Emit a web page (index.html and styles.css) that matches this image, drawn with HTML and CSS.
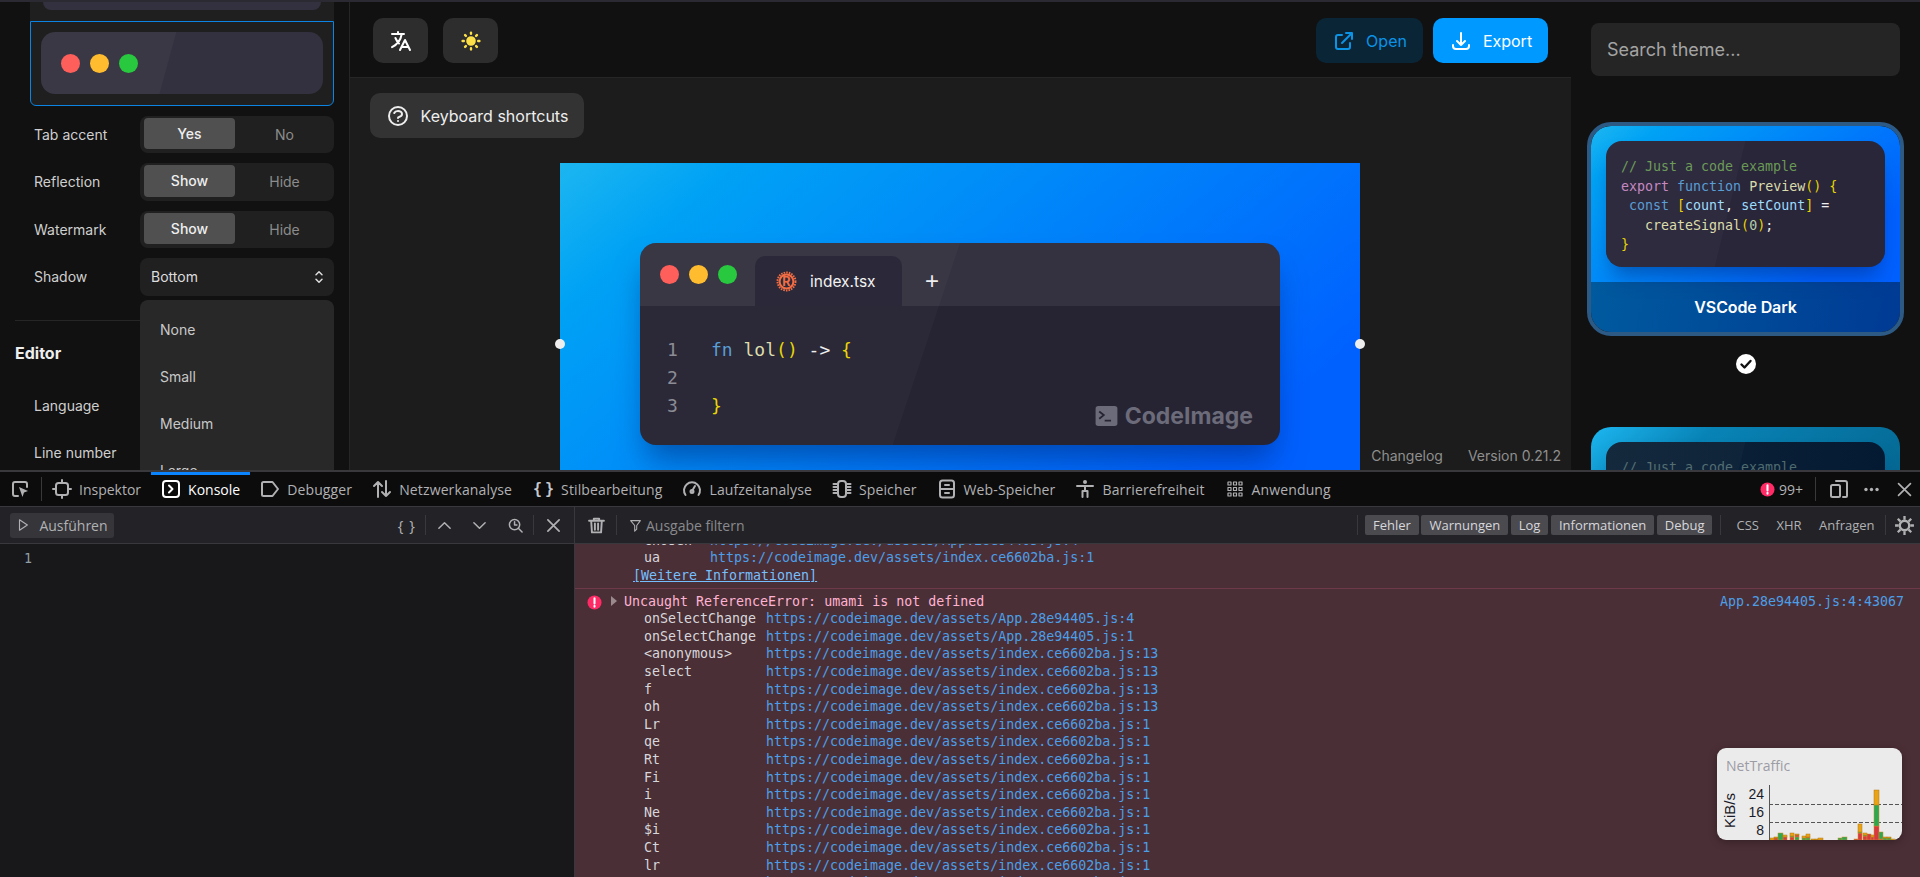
FILE: index.html
```html
<!DOCTYPE html>
<html lang="de">
<head>
<meta charset="utf-8">
<title>CodeImage</title>
<link rel="stylesheet" href="styles.css">
</head>
<body>
<div class="app">
  <aside class="sidebar">
    <div class="frame-card prev"><div class="mini-window"></div></div>
    <div class="frame-card selected">
      <div class="mini-window full">
        <span class="dot red"></span><span class="dot yellow"></span><span class="dot green"></span>
      </div>
    </div>
    <div class="rows">
      <div class="row"><span class="row-label">Tab accent</span><div class="seg"><span class="seg-on">Yes</span><span class="seg-off">No</span></div></div>
      <div class="row"><span class="row-label">Reflection</span><div class="seg"><span class="seg-on">Show</span><span class="seg-off">Hide</span></div></div>
      <div class="row"><span class="row-label">Watermark</span><div class="seg"><span class="seg-on">Show</span><span class="seg-off">Hide</span></div></div>
      <div class="row"><span class="row-label">Shadow</span>
        <div class="select">Bottom
          <svg class="selector" viewBox="0 0 24 24"><path d="M8 9l4-4 4 4m0 6l-4 4-4-4"/></svg>
          <div class="dropdown"><span>None</span><span>Small</span><span>Medium</span><span>Large</span></div>
        </div>
      </div>
    </div>
    <hr class="divider">
    <h2 class="section-title">Editor</h2>
    <div class="editor-rows">
      <span class="row-label">Language</span>
      <span class="row-label">Line number</span>
    </div>
  </aside>

  <main class="main">
    <div class="toolbar">
      <button class="btn-icon">
        <svg class="ic22" viewBox="0 0 24 24"><path d="M3 5h12M9 3v2m1.048 9.5A18.022 18.022 0 016.412 9m6.088 9h7M11 21l5-10 5 10M12.751 5C11.783 10.77 8.07 15.61 3 18.129"/></svg>
      </button>
      <button class="btn-icon">
        <svg class="ic22 sun" viewBox="0 0 20 20"><path d="M10 2a1 1 0 011 1v1a1 1 0 11-2 0V3a1 1 0 011-1zm4 8a4 4 0 11-8 0 4 4 0 018 0zm-.464 4.95l.707.707a1 1 0 001.414-1.414l-.707-.707a1 1 0 00-1.414 1.414zm2.12-10.607a1 1 0 010 1.414l-.706.707a1 1 0 11-1.414-1.414l.707-.707a1 1 0 011.414 0zM17 11a1 1 0 100-2h-1a1 1 0 100 2h1zm-7 4a1 1 0 011 1v1a1 1 0 11-2 0v-1a1 1 0 011-1zM5.05 6.464A1 1 0 106.465 5.05l-.708-.707a1 1 0 00-1.414 1.414l.707.707zm1.414 8.486l-.707.707a1 1 0 01-1.414-1.414l.707-.707a1 1 0 011.414 1.414zM4 11a1 1 0 100-2H3a1 1 0 000 2h1z"/></svg>
      </button>
      <div class="toolbar-spacer"></div>
      <button class="btn-open">
        <svg class="ic22" viewBox="0 0 24 24"><path d="M10 6H6a2 2 0 00-2 2v10a2 2 0 002 2h10a2 2 0 002-2v-4M14 4h6m0 0v6m0-6L10 14"/></svg>Open
      </button>
      <button class="btn-export">
        <svg class="ic22" viewBox="0 0 24 24"><path d="M4 16v1a3 3 0 003 3h10a3 3 0 003-3v-1m-4-4l-4 4m0 0l-4-4m4 4V4"/></svg>Export
      </button>
    </div>
    <div class="stage">
      <button class="btn-shortcuts">
        <svg class="ic24" viewBox="0 0 24 24"><path d="M8.228 9c.549-1.165 2.03-2 3.772-2 2.21 0 4 1.343 4 3 0 1.4-1.278 2.575-3.006 2.907-.542.104-.994.54-.994 1.093m0 3h.01M21 12a9 9 0 11-18 0 9 9 0 0118 0z"/></svg>Keyboard shortcuts
      </button>
      <div class="canvas">
        <span class="handle left"></span><span class="handle right"></span>
        <div class="window">
          <div class="win-head">
            <span class="dot red"></span><span class="dot yellow"></span><span class="dot green"></span>
            <div class="tab">
              <svg class="rust" viewBox="0 0 20 20"><circle class="rust-teeth" cx="10" cy="10" r="8.6"/><circle class="rust-ring" cx="10" cy="10" r="6.6"/><text x="10" y="14.4" class="rust-r">R</text></svg>
              index.tsx
            </div>
            <span class="plus">+</span>
          </div>
          <div class="win-body">
            <div class="gutter"><span>1</span><span>2</span><span>3</span></div>
            <div class="code"><span><i class="kw">fn</i> <i class="fnname">lol</i><i class="yl">()</i> <i class="wh">-&gt;</i> <i class="yl">{</i></span><span>&nbsp;</span><span><i class="yl">}</i></span></div>
          </div>
          <div class="watermark">
            <svg class="wm-icon" viewBox="0 0 24 22"><rect width="24" height="22" rx="3"/><path d="M4 6l5 4-5 4M10 16h7"/></svg>
            <span>CodeImage</span>
          </div>
        </div>
      </div>
      <div class="foot"><span>Changelog</span><span>Version 0.21.2</span></div>
    </div>
  </main>

  <aside class="themes">
    <div class="search">Search theme...</div>
    <div class="theme-card active">
      <div class="theme-art">
        <div class="theme-code">
<span class="cm">// Just a code example</span>
<span><i class="pk">export</i> <i class="kw">function</i> <i class="fnname">Preview</i><i class="yl">()</i> <i class="yl">{</i></span>
<span> <i class="kw">const</i> <i class="yl">[</i><i class="vr">count</i><i class="wh">,</i> <i class="vr">setCount</i><i class="yl">]</i> <i class="wh">=</i></span>
<span>   <i class="fnname">createSignal</i><i class="yl">(</i><i class="nm">0</i><i class="yl">)</i><i class="wh">;</i></span>
<span class="yl">}</span></div>
      </div>
      <div class="theme-label">VSCode Dark</div>
    </div>
    <div class="check-wrap">
      <svg class="check" viewBox="0 0 20 20"><circle cx="10" cy="10" r="10"/><path d="M5.5 10.5l3 3 6-6.5"/></svg>
    </div>
    <div class="theme-card second">
      <div class="theme-art dim">
        <div class="theme-code deep"><span class="cm dimcm">// Just a code example</span></div>
      </div>
    </div>
  </aside>
</div>

<section class="devtools">
  <nav class="dt-tabs">
    <span class="dt-pick">
      <svg class="dt-ic" viewBox="0 0 20 20"><path d="M8 17H5a2 2 0 01-2-2V5a2 2 0 012-2h10a2 2 0 012 2v3"/><path class="fill" d="M9 8l9 4-4 1.5L12.5 18z"/></svg>
    </span>
    <a class="dt-tab"><svg class="dt-ic" viewBox="0 0 20 20"><rect x="4" y="4" width="12" height="12" rx="2.5"/><path d="M10 1v3M10 16v3M1 10h3M16 10h3"/></svg>Inspektor</a>
    <a class="dt-tab current"><svg class="dt-ic" viewBox="0 0 20 20"><rect x="2" y="2" width="16" height="16" rx="3"/><path d="M8 6.5l3.5 3.5L8 13.5"/></svg>Konsole</a>
    <a class="dt-tab"><svg class="dt-ic" viewBox="0 0 20 20"><path d="M3.5 3h9l5.5 7-5.5 7h-9a1.500 1.500 0 01-1.500-1.500v-11A1.500 1.500 0 013.500 3z"/></svg>Debugger</a>
    <a class="dt-tab"><svg class="dt-ic" viewBox="0 0 20 20"><path d="M6 18V3M2 7l4-4 4 4M14 2v15M10 13l4 4 4-4"/></svg>Netzwerkanalyse</a>
    <a class="dt-tab"><span class="braces">{ }</span>Stilbearbeitung</a>
    <a class="dt-tab"><svg class="dt-ic" viewBox="0 0 20 20"><path d="M3.500 16a8 8 0 1113 0M10 12l3-5"/><circle cx="10" cy="12.500" r="1.500"/></svg>Laufzeitanalyse</a>
    <a class="dt-tab"><svg class="dt-ic" viewBox="0 0 20 20"><rect x="6" y="2" width="8" height="16" rx="3"/><path d="M1.500 5H5M1.500 8H5M1.500 11H5M1.500 14H5M15 5h3.500M15 8h3.500M15 11h3.500M15 14h3.500"/></svg>Speicher</a>
    <a class="dt-tab"><svg class="dt-ic" viewBox="0 0 20 20"><rect x="3" y="1.500" width="14" height="17" rx="2.500"/><path d="M3 10h14M8 6h4M8 14h4"/></svg>Web-Speicher</a>
    <a class="dt-tab"><svg class="dt-ic" viewBox="0 0 20 20"><circle class="fill" cx="10" cy="3" r="2"/><path d="M2 7h16M10 7v5M7.500 18v-6h5v6"/></svg>Barrierefreiheit</a>
    <a class="dt-tab"><svg class="dt-ic thin" viewBox="0 0 20 20"><path d="M3 3h3v3H3zM8.500 3h3v3h-3zM14 3h3v3h-3zM3 8.500h3v3H3zM8.500 8.500h3v3h-3zM14 8.500h3v3h-3zM3 14h3v3H3zM8.500 14h3v3h-3zM14 14h3v3h-3z"/></svg>Anwendung</a>
    <div class="dt-right">
      <svg class="err" viewBox="0 0 16 16"><circle cx="8" cy="8" r="7.500"/><path d="M8 3.500v5.500M8 11.500v1"/></svg>
      <span class="dt-count">99+</span>
      <span class="vsep tall"></span>
      <svg class="dt-ic resp" viewBox="0 0 20 20"><path d="M7 2h9a2 2 0 012 2v13a1 1 0 01-1 1h-3"/><rect x="2" y="6" width="9" height="12" rx="1.500"/></svg>
      <svg class="dt-ic more" viewBox="0 0 20 20"><circle class="fill" cx="3.500" cy="10" r="2"/><circle class="fill" cx="10" cy="10" r="2"/><circle class="fill" cx="16.500" cy="10" r="2"/></svg>
      <svg class="dt-ic closex" viewBox="0 0 20 20"><path d="M3 3l14 14M17 3L3 17"/></svg>
    </div>
  </nav>

  <div class="dt-panes">
    <div class="dt-editor">
      <div class="editor-bar">
        <button class="run"><svg class="tb-ic" viewBox="0 0 16 16"><path d="M4 2l9 6-9 6z"/></svg>Ausführen</button>
        <div class="toolbar-spacer"></div>
        <span class="brace-btn">{ }</span>
        <span class="vsep"></span>
        <svg class="tb-ic up" viewBox="0 0 16 16"><path d="M2 11l6-6 6 6"/></svg>
        <svg class="tb-ic down" viewBox="0 0 16 16"><path d="M2 5l6 6 6-6"/></svg>
        <svg class="tb-ic hist" viewBox="0 0 16 16"><circle cx="7" cy="7" r="5.500"/><path d="M11 11l4 4M7 4v3.500h2.500"/></svg>
        <span class="vsep"></span>
        <svg class="tb-ic shut" viewBox="0 0 16 16"><path d="M2 2l12 12M14 2L2 14"/></svg>
      </div>
      <div class="editor-gutter">1</div>
    </div>
    <div class="dt-console">
      <div class="console-bar">
        <svg class="tb-ic trash" viewBox="0 0 16 16"><path d="M1 3.500h14M5.500 3.500V1.500h5v2M3 3.500l.7 11h8.600l.7-11M6.500 6v6M9.500 6v6"/></svg>
        <span class="vsep"></span>
        <svg class="tb-ic filter" viewBox="0 0 16 16"><path d="M2 2h12L9.500 8v4.500L7 15V8z"/></svg>
        <span class="filter-text">Ausgabe filtern</span>
        <span class="vsep chipstart"></span>
        <span class="chip">Fehler</span><span class="chip">Warnungen</span><span class="chip">Log</span><span class="chip">Informationen</span><span class="chip">Debug</span>
        <span class="vsep chipsep"></span>
        <span class="plain">CSS</span><span class="plain">XHR</span><span class="plain last">Anfragen</span>
        <span class="vsep"></span>
        <svg class="gear" viewBox="0 0 20 20"><circle cx="10" cy="10" r="4.500"/><path d="M10 1v3.500M10 15.500V19M1 10h3.500M15.500 10H19M3.600 3.600l2.500 2.500M13.900 13.900l2.500 2.500M16.400 3.600l-2.500 2.500M6.100 13.900l-2.500 2.500"/></svg>
      </div>
      <div class="log">
        <div class="log-inner">
          <div class="st short"><b>chosen</b><a>https://codeimage.dev/assets/App.28e94405.js:4</a></div>
          <div class="st short"><b>ua</b><a>https://codeimage.dev/assets/index.ce6602ba.js:1</a></div>
          <div class="more-info">[Weitere Informationen]</div>
          <div class="msg">
            <svg class="err small" viewBox="0 0 16 16"><circle cx="8" cy="8" r="7.500"/><path d="M8 3.500v5.500M8 11.500v1"/></svg>
            <span class="tri"></span>
            <span class="msg-text">Uncaught ReferenceError: umami is not defined</span>
            <a class="msg-src">App.28e94405.js:4:43067</a>
          </div>
          <div class="st"><b>onSelectChange</b><a>https://codeimage.dev/assets/App.28e94405.js:4</a></div>
          <div class="st"><b>onSelectChange</b><a>https://codeimage.dev/assets/App.28e94405.js:1</a></div>
          <div class="st"><b>&lt;anonymous&gt;</b><a>https://codeimage.dev/assets/index.ce6602ba.js:13</a></div>
          <div class="st"><b>select</b><a>https://codeimage.dev/assets/index.ce6602ba.js:13</a></div>
          <div class="st"><b>f</b><a>https://codeimage.dev/assets/index.ce6602ba.js:13</a></div>
          <div class="st"><b>oh</b><a>https://codeimage.dev/assets/index.ce6602ba.js:13</a></div>
          <div class="st"><b>Lr</b><a>https://codeimage.dev/assets/index.ce6602ba.js:1</a></div>
          <div class="st"><b>qe</b><a>https://codeimage.dev/assets/index.ce6602ba.js:1</a></div>
          <div class="st"><b>Rt</b><a>https://codeimage.dev/assets/index.ce6602ba.js:1</a></div>
          <div class="st"><b>Fi</b><a>https://codeimage.dev/assets/index.ce6602ba.js:1</a></div>
          <div class="st"><b>i</b><a>https://codeimage.dev/assets/index.ce6602ba.js:1</a></div>
          <div class="st"><b>Ne</b><a>https://codeimage.dev/assets/index.ce6602ba.js:1</a></div>
          <div class="st"><b>$i</b><a>https://codeimage.dev/assets/index.ce6602ba.js:1</a></div>
          <div class="st"><b>Ct</b><a>https://codeimage.dev/assets/index.ce6602ba.js:1</a></div>
          <div class="st"><b>lr</b><a>https://codeimage.dev/assets/index.ce6602ba.js:1</a></div>
          <div class="st"><b>Yr</b><a>https://codeimage.dev/assets/index.ce6602ba.js:1</a></div>
        </div>
      </div>
    </div>
  </div>
</section>

<div class="nettraffic">
  <div class="nt-title">NetTraffic</div>
  <span class="nt-unit">KiB/s</span>
  <div class="nt-scale"><span>24</span><span>16</span><span>8</span></div>
  <svg class="nt-chart" viewBox="0 0 133 55">
    <path class="nt-dash" d="M0 19.500h133M0 37.500h133"/>
    <g class="r"><rect x="5" y="53" width="4" height="2"/><rect x="14" y="52" width="4" height="3"/><rect x="21" y="52" width="4" height="3"/><rect x="26" y="50" width="4" height="2"/><rect x="37" y="52" width="4" height="1"/><rect x="85" y="54" width="4" height="1"/><rect x="89" y="48" width="4" height="7"/><rect x="94" y="51" width="4" height="4"/><rect x="98" y="49" width="4" height="6"/><rect x="102" y="52" width="3" height="3"/><rect x="105" y="41" width="5" height="14"/><rect x="110" y="54" width="4" height="1"/></g>
    <g class="g"><rect x="9" y="48" width="5" height="7"/><rect x="21" y="51" width="4" height="1"/><rect x="26" y="52" width="4" height="3"/><rect x="33" y="53" width="4" height="2"/><rect x="37" y="53" width="4" height="2"/><rect x="69" y="53" width="4" height="2"/><rect x="73" y="52" width="5" height="3"/><rect x="89" y="47" width="4" height="1"/><rect x="94" y="50" width="4" height="1"/><rect x="105" y="20" width="5" height="21"/><rect x="110" y="47" width="4" height="7"/><rect x="114" y="53" width="4" height="2"/><rect x="118" y="53" width="4" height="2"/></g>
    <g class="o"><rect x="1" y="53" width="4" height="2"/><rect x="5" y="52" width="4" height="1"/><rect x="14" y="50" width="4" height="2"/><rect x="21" y="48" width="4" height="3"/><rect x="26" y="49" width="4" height="1"/><rect x="33" y="51" width="4" height="2"/><rect x="37" y="49" width="4" height="3"/><rect x="42" y="54" width="4" height="1"/><rect x="46" y="54" width="3" height="1"/><rect x="49" y="53" width="5" height="2"/><rect x="89" y="39" width="4" height="8"/><rect x="94" y="48" width="4" height="2"/><rect x="102" y="50" width="3" height="2"/><rect x="105" y="5" width="5" height="15"/><rect x="114" y="52" width="4" height="1"/><rect x="118" y="52" width="4" height="1"/><rect x="122" y="54" width="4" height="1"/></g>
    <path class="nt-axis" d="M.5 0v55"/>
  </svg>
</div>
</body>
</html>
```

FILE: styles.css
```css
* { box-sizing: border-box; }
html, body { margin: 0; height: 877px; overflow: hidden; }
body { display: flex; flex-direction: column; background: #0c0c0d; font-family: Inter, "Liberation Sans", sans-serif; color: #fff; border-top: 2px solid #2b2a33; position: relative; }
i { font-style: normal; }
button { font: inherit; border: 0; color: inherit; padding: 0; display: inline-flex; align-items: center; justify-content: center; }
svg { display: block; flex: none; }
.toolbar-spacer { flex: 1; }

/* app */
.app { height: 468px; display: flex; overflow: hidden; flex: none; }
.sidebar { width: 350px; flex: none; background: #111; border-right: 1px solid #262626; padding: 0 15px; font-size: 14px; position: relative; }
.frame-card { margin: 0 0 0 15px; width: 304px; background: #1f1f1f; }
.frame-card.prev { height: 19px; padding: 0 13px; }
.mini-window { background: #33313f; }
.prev .mini-window { height: 8px; border-radius: 0 0 12px 12px; }
.frame-card.selected { height: 85px; border: 1px solid #0b84e3; border-radius: 0 0 6px 6px; padding: 10px; }
.mini-window.full { height: 62px; border-radius: 14px; display: flex; align-items: center; gap: 10px; padding-left: 20px; position: relative; overflow: hidden; }
.mini-window.full::before { content: ""; position: absolute; inset: 0; background: rgba(255,255,255,.035); clip-path: polygon(0 0, 48% 0, 42% 100%, 0 100%); }
.dot { width: 19px; height: 19px; border-radius: 50%; flex: none; position: relative; }
.dot.red { background: #ff5f5a; }
.dot.yellow { background: #ffbc2e; }
.dot.green { background: #28c83f; }
.rows { margin: 9.500px 0 0 19px; display: flex; flex-direction: column; gap: 10px; width: 300px; }
.row { height: 37.500px; display: flex; align-items: center; }
.row-label { color: #cfcfcf; width: 106px; flex: none; }
.seg { width: 194px; height: 100%; background: #202020; border-radius: 8px; padding: 2px 0 2px 4px; display: flex; }
.seg span { flex: 1; display: flex; align-items: center; justify-content: center; }
.seg-on { background: #505050; border-radius: 4px; font-weight: 500; color: #eee; margin-bottom: 2px; flex: none; width: 91px; }
.seg .seg-on { flex: none; }
.seg-off { color: #8c8c8c; }
.select { width: 194px; height: 100%; background: #202020; border-radius: 8px; display: flex; align-items: center; padding-left: 11px; color: #ddd; position: relative; }
.selector { width: 18px; height: 18px; position: absolute; right: 6px; top: 10px; fill: none; stroke: #ddd; stroke-width: 2; stroke-linecap: round; stroke-linejoin: round; }
.dropdown { position: absolute; left: 0; top: 42px; width: 194px; height: 200px; background: #282828; border-radius: 8px; padding: 5.500px 20px; display: flex; flex-direction: column; color: #c8c8c8; }
.dropdown span { height: 47px; display: flex; align-items: center; flex: none; }
.divider { border: 0; border-top: 1px solid #262626; margin: 24.500px 0 0; width: 319px; height: 1px; }
.section-title { margin: 21.500px 0 0; font-size: 16px; font-weight: 700; line-height: 20px; color: #eee; }
.editor-rows { margin: 34.500px 0 0 19px; display: flex; flex-direction: column; gap: 30px; }
.editor-rows .row-label { line-height: 17px; width: auto; }

.main { flex: 1; min-width: 0; background: #1c1c1c; display: flex; flex-direction: column; position: relative; }
.toolbar { height: 76px; flex: none; background: #111; border-bottom: 1px solid #262626; display: flex; align-items: flex-start; padding: 16px 23px 0 23px; }
.btn-icon { width: 55px; height: 45px; background: #2d2d2d; border-radius: 10px; margin-right: 15px; }
.ic22 { width: 24px; height: 24px; fill: none; stroke: currentColor; stroke-width: 2; stroke-linecap: round; stroke-linejoin: round; }
.ic24 { width: 24px; height: 24px; fill: none; stroke: currentColor; stroke-width: 2; stroke-linecap: round; stroke-linejoin: round; }
.sun { fill: #fde047; stroke: none; }
.btn-open { width: 107px; height: 45px; background: #0a2536; color: #0b93e6; border-radius: 10px; gap: 10px; font-size: 16px; margin-right: 10px; }
.btn-export { width: 115px; height: 45px; background: #0099ff; color: #fff; border-radius: 10px; gap: 10px; font-size: 16px; }
.stage { flex: 1; min-height: 0; padding: 15px 0 0 20px; position: relative; }
.btn-shortcuts { width: 214px; height: 45px; background: #333; border-radius: 10px; gap: 11px; font-size: 16px; color: #eee; display: flex; }
.canvas { width: 800px; height: 362px; margin: 25px 0 0 190px; padding: 80px; background: linear-gradient(140deg, #1cb6f0 0%, #00a2f5 14%, #0061ff 82%); position: relative; }
.handle { position: absolute; top: 176px; width: 10px; height: 10px; border-radius: 50%; background: #eee; }
.handle.left { left: -5px; }
.handle.right { right: -5px; }
.window { height: 202px; background: #262433; border-radius: 16px; position: relative; overflow: visible; box-shadow: 0 20px 30px -6px rgba(0,40,120,.55); }
.window::before { content: ""; position: absolute; inset: 0; border-radius: 16px 0 0 16px; background: rgba(255,255,255,.025); clip-path: polygon(0 0, 50% 0, 39.500% 100%, 0 100%); pointer-events: none; }
.win-head { height: 63px; background: rgba(255,255,255,.065); border-radius: 16px 16px 0 0; display: flex; align-items: flex-end; padding-left: 20px; position: relative; }
.win-head .dot { margin-right: 10px; margin-bottom: 22px; }
.win-head .dot.green { margin-right: 0; }
.tab { width: 147px; height: 50px; background: #2b2939; border-radius: 10px 10px 0 0; margin-left: 18px; display: flex; align-items: center; padding: 0 0 0 21px; gap: 13px; font-size: 15.500px; color: #f2f2f2; position: relative; }
.rust { width: 21px; height: 21px; }
.rust-teeth { fill: none; stroke: #f26d43; stroke-width: 1.800; stroke-dasharray: 1.500 1; }
.rust-ring { fill: none; stroke: #f26d43; stroke-width: 2; }
.rust-r { fill: #f26d43; font: 700 12px Inter, sans-serif; text-anchor: middle; }
.plus { font-size: 24px; font-weight: 300; line-height: 24px; margin: 0 0 13px 23px; color: #eee; font-family: "Liberation Sans", sans-serif; }
.win-body { display: flex; padding-top: 30px; font: 18px/28px "DejaVu Sans Mono", monospace; }
.gutter { width: 71px; padding-left: 27px; display: flex; flex-direction: column; color: #8a8a94; }
.code { display: flex; flex-direction: column; color: #ddd; white-space: pre; }
.kw { color: #569cd6; }
.fnname { color: #dcdcaa; }
.yl { color: #e6d400; }
.wh { color: #eee; }
.pk { color: #c586c0; }
.vr { color: #9cdcfe; }
.nm { color: #b5cea8; }
.cm { color: #6a9955; }
.watermark { position: absolute; right: 27px; bottom: 15px; display: flex; align-items: center; gap: 7px; color: #6c6b7a; font-size: 23px; font-weight: 700; }
.wm-icon { width: 23px; height: 20px; fill: #6c6b7a; }
.wm-icon path { fill: none; stroke: #262433; stroke-width: 2; }
.foot { position: absolute; right: 10px; bottom: 6px; display: flex; gap: 25px; font-size: 14px; color: #8f8f8f; }

.themes { width: 350px; flex: none; background: #111; padding: 21px 20px 0 20px; overflow: hidden; border-left: 1px solid #262626; margin-left: -1px; }
.search { width: 309px; height: 53px; background: #252525; border-radius: 8px; padding-left: 16px; display: flex; align-items: center; font-size: 18px; color: #a3a3a3; }
.theme-card { width: 309px; border-radius: 20px; overflow: hidden; }
.theme-card.active { height: 206px; margin-top: 50px; outline: 4px solid #2c5a85; outline-offset: 0; }
.theme-art { height: 156px; padding: 15px; background: linear-gradient(140deg, #1cb6f0 0%, #00a2f5 14%, #0061ff 82%); }
.theme-code { height: 126px; background: #29263a; border-radius: 16px; padding: 16px 15px; font: 13.300px/19.500px "DejaVu Sans Mono", monospace; color: #ddd; white-space: pre; display: flex; flex-direction: column; box-shadow: 0 14px 20px -6px rgba(0,40,120,.5); position: relative; overflow: hidden; }
.theme-code::before { content: ""; position: absolute; inset: 0; background: rgba(255,255,255,.025); clip-path: polygon(0 0, 50% 0, 39% 100%, 0 100%); }
.theme-label { height: 50px; background: linear-gradient(100deg, #005a9e, #003a94); display: flex; align-items: center; justify-content: center; font-weight: 600; font-size: 16px; letter-spacing: -.1px; }
.check-wrap { height: 95px; display: flex; align-items: flex-start; justify-content: center; padding-top: 22px; }
.check { width: 20px; height: 20px; fill: #fff; }
.check path { fill: none; stroke: #111; stroke-width: 2.400; stroke-linecap: round; stroke-linejoin: round; }
.theme-card.second { height: 200px; }
.theme-art.dim { background: linear-gradient(140deg, #1cb6f0 0%, #0883b6 25%, #045f87 90%); }
.theme-code.deep { background: linear-gradient(90deg, #0f2438, #041a33); }
.dimcm { color: #4f6b70; }

/* devtools */
.devtools { flex: 1; min-height: 0; display: flex; flex-direction: column; border-top: 2px solid #38383d; font-family: "Open Sans", "Noto Sans", sans-serif; font-size: 14px; color: #b1b1b3; position: relative; }
.dt-tabs { height: 35px; flex: none; background: #0c0c0d; border-bottom: 1px solid #38383d; display: flex; align-items: center; position: relative; }
.dt-ic { width: 20px; height: 20px; fill: none; stroke: #b1b1b3; stroke-width: 2; stroke-linecap: round; stroke-linejoin: round; }
.dt-ic .fill, .dt-ic.more .fill { fill: #b1b1b3; stroke: none; }
.dt-ic.thin { stroke-width: 1.200; }
.dt-pick { width: 42px; height: 24px; padding-left: 10px; border-right: 1px solid #38383d; display: flex; align-items: center; flex: none; }
.dt-tab { display: flex; align-items: center; gap: 7px; padding: 0 10px; height: 100%; white-space: nowrap; position: relative; }
.current ~ .dt-tab { letter-spacing: .13px; }
.dt-tab.current { color: #fff; }
.dt-tab.current .dt-ic { stroke: #fff; }
.dt-tab.current::before { content: ""; position: absolute; left: 0; right: 0; top: 0; height: 3px; background: #0a84ff; }
.braces { font: 700 15px "DejaVu Sans Mono", monospace; width: 20px; text-align: center; color: #c8c8ca; letter-spacing: -3px; white-space: pre; margin-right: 2px; }
.dt-right { position: absolute; right: 7.500px; top: 0; bottom: 0; display: flex; align-items: center; }
.err { width: 15px; height: 15px; fill: #ff2a66; }
.err path { fill: none; stroke: #fff; stroke-width: 2.200; stroke-linecap: round; }
.err.small { width: 15px; height: 15px; }
.dt-count { margin: 0 12px 0 3.500px; }
.vsep { width: 1px; height: 20px; background: #38383d; flex: none; }
.vsep.tall { height: 24px; }
.resp { margin: 0 13.500px 0 13px; }
.more { width: 17px; height: 17px; }
.closex { width: 17px; height: 17px; margin-left: 16px; }
.dt-panes { flex: 1; min-height: 0; display: flex; }
.dt-editor { width: 575px; flex: none; background: #18181a; border-right: 1px solid #38383d; display: flex; flex-direction: column; }
.editor-bar, .console-bar { height: 37px; flex: none; background: #232327; border-bottom: 1px solid #38383d; display: flex; align-items: center; }
.editor-bar { padding: 0 13px 0 10px; }
.run { width: 104px; height: 25px; border-radius: 3px; color: #b1b1b3; gap: 9px; font-size: 14px; background: #35353a; }
.tb-ic { width: 15px; height: 15px; fill: none; stroke: #b1b1b3; stroke-width: 1.300; stroke-linecap: round; stroke-linejoin: round; }
.run .tb-ic { width: 14px; height: 14px; }
.brace-btn { font: 15px "Open Sans", sans-serif; margin-right: 9px; letter-spacing: 1px; }
.up { margin: 0 13px 0 11px; stroke-width: 1.600; }
.down { margin: 0 13px 0 7px; stroke-width: 1.600; }
.hist { margin: 0 10px 0 8px; stroke-width: 1.600; }
.shut { margin-left: 12px; stroke-width: 1.800; }
.editor-gutter { padding: 6px 0 0 24px; font: 13.300px/17.600px "DejaVu Sans Mono", monospace; color: #8f9fa5; }
.dt-console { flex: 1; min-width: 0; display: flex; flex-direction: column; }
.console-bar { padding: 0 5.500px 0 13px; }
.trash { width: 17px; height: 17px; stroke-width: 1.800; margin-right: 11px; }
.filter { width: 13px; height: 13px; margin: 0 4px 0 12px; }
.filter-text { flex: 1; color: #8a8a8e; font-size: 14px; white-space: nowrap; }
.chipstart { margin-right: 7px; }
.chip { height: 20px; background: #4a4a4f; border-radius: 2px; padding: 0 8px; margin: 0 2.500px 0 0; display: flex; align-items: center; font-size: 13px; color: #d7d7db; }
.chipsep { margin: 0 15px 0 5.500px; }
.plain { font-size: 13px; margin-right: 17.500px; }
.plain.last { margin-right: 10px; }
.gear { width: 21px; height: 21px; margin-left: 8px; fill: none; stroke: #b1b1b3; stroke-width: 2.200; }
.log { flex: 1; min-height: 0; overflow: hidden; background: #4b2f36; font: 13.300px/17.600px "DejaVu Sans Mono", monospace; position: relative; }
.log-inner { margin-top: -12.400px; }
.st { display: flex; padding-left: 69px; white-space: pre; }
.st b { font-weight: 400; color: #d7d7db; width: 122px; flex: none; }
.st.short b { width: 66px; }
.st a { color: #4b9fe8; }
.more-info { padding-left: 58px; color: #75bfff; text-decoration: underline; height: 20px; }
.msg { height: 22.500px; border-top: 1px solid #6e3a47; margin-top: 1px; padding: 4px 16px 0 12px; display: flex; align-items: flex-start; position: relative; }
.msg .err { margin-top: 2px; }
.tri { width: 0; height: 0; border-left: 6px solid #9a8a8e; border-top: 5px solid transparent; border-bottom: 5px solid transparent; margin: 3px 0 0 9px; flex: none; }
.msg-text { color: #ffb3d2; margin-left: 7px; flex: 1; white-space: pre; }
.msg-src { color: #4b9fe8; }

/* tray widget */
.nettraffic { position: absolute; left: 1717px; top: 746px; width: 185px; height: 92px; background: #ecebec; border-radius: 9px; overflow: hidden; font-family: "Open Sans", sans-serif; box-shadow: 0 2px 8px rgba(0,0,0,.3); }
.nt-title { position: absolute; left: 9px; top: 9px; font-size: 14px; color: #9c9ca4; line-height: 18px; }
.nt-unit { position: absolute; left: -4px; top: 56px; width: 34px; text-align: center; transform: rotate(-90deg); font: 15px "Liberation Sans", sans-serif; color: #1a1a28; line-height: 14px; transform-origin: 50% 50%; }
.nt-scale { position: absolute; left: 28px; top: 37px; width: 19px; display: flex; flex-direction: column; text-align: right; font: 14px/18px "Liberation Sans", sans-serif; color: #1a1a28; }
.nt-chart { position: absolute; left: 52px; top: 37px; width: 133px; height: 55px; }
.nt-axis { stroke: #555; stroke-width: 1; fill: none; }
.nt-dash { stroke: #555; stroke-width: 1; stroke-dasharray: 4 2; fill: none; }
.nt-chart .r rect { fill: #d9383f; stroke: #c8902a; stroke-width: .500; }
.nt-chart .g rect { fill: #2ea84f; stroke: #c8902a; stroke-width: .500; }
.nt-chart .o rect { fill: #e8a317; stroke: #b07a10; stroke-width: .500; }
```
